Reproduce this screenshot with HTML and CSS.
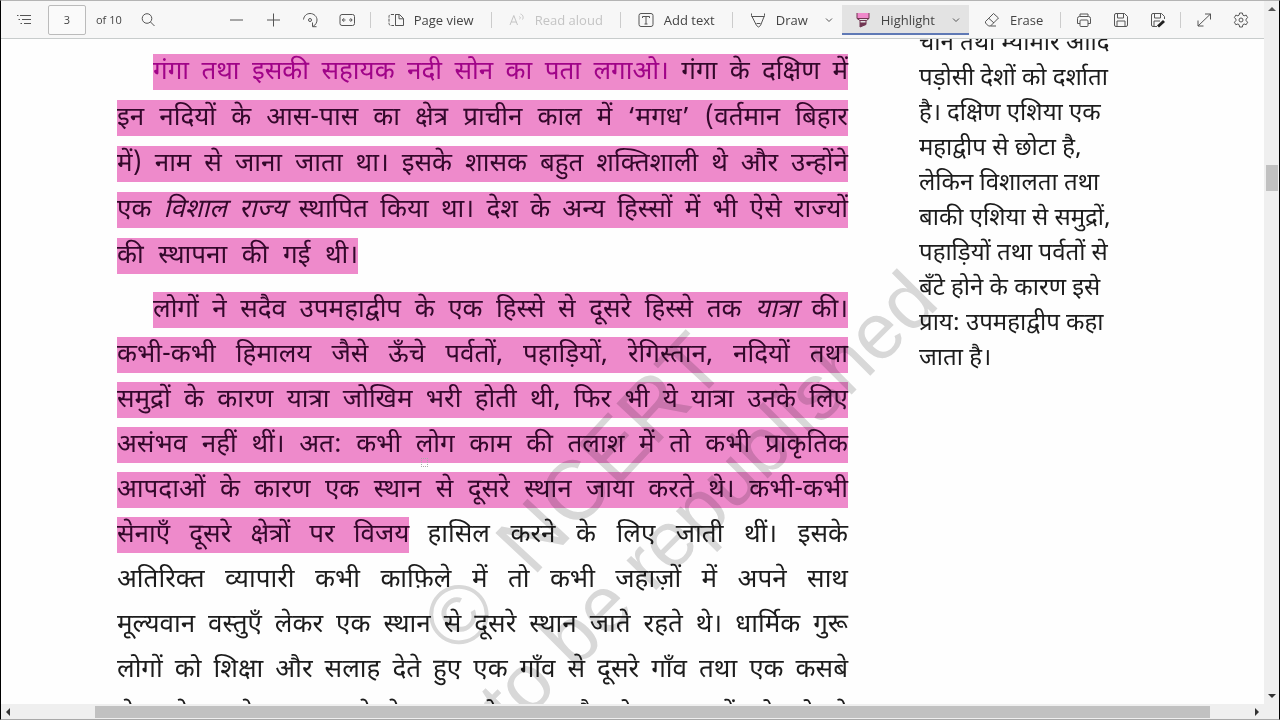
FILE: index.html
```html
<!DOCTYPE html>
<html lang="hi">
<head>
<meta charset="utf-8">
<title>PDF</title>
<link rel="stylesheet" href="styles.css">
</head>
<body>
<div class="viewer">
  <div class="main">
    <header class="toolbar" lang="en">
      <button class="icon-btn" aria-label="Contents"><svg viewBox="0 0 16 16"><path d="M4 3.500h11M6 7.500h9M8 11.500h7M1 3.500h1.500M2.500 7.500h1.500M4.500 11.500h1.500"/></svg></button>
      <input class="page-no" aria-label="Page number" value="3">
      <span class="count">of 10</span>
      <button class="icon-btn" aria-label="Search"><svg viewBox="0 0 16 16"><circle cx="7" cy="6.500" r="4.800"/><path d="M10.500 10l4 4"/></svg></button>
      <div class="zoom-group">
        <button class="icon-btn" aria-label="Zoom out"><svg viewBox="0 0 16 16"><path d="M2 8h13"/></svg></button>
        <button class="icon-btn" aria-label="Zoom in"><svg viewBox="0 0 16 16"><path d="M2 8h13M8.500 1.500v13"/></svg></button>
        <button class="icon-btn" aria-label="Rotate"><svg viewBox="0 0 16 16"><path d="M1.500 7.500C2 3.500 5 1.500 8 1.500c4 0 7 3 7 6.500 0 2.500-1.500 5-4 6.500M10.500 10.500v4.200h4"/><circle cx="8" cy="8" r="1.500"/></svg></button>
        <button class="icon-btn" aria-label="Fit to width"><svg viewBox="0 0 16 16"><rect x="1" y="2.500" width="14.500" height="11" rx="2"/><path d="M6.500 8h-3M5 6.200L3.300 8 5 9.800M10 8h3M11.500 6.200L13.200 8l-1.700 1.800"/></svg></button>
      </div>
      <span class="sep"></span>
      <button class="tool"><svg viewBox="0 0 16 16"><path d="M7.500 2.500v11M6 2.500H3a2 2 0 0 0-2 2v7a2 2 0 0 0 2 2h3" stroke-dasharray="3 1"/><path d="M7.500 2.500h4l4 4v7h-8zM11 2.500v4.300h4.500"/></svg>Page view</button>
      <span class="sep"></span>
      <button class="tool" disabled><svg viewBox="0 0 16 16"><path d="M1 13L4.800 3.500 8.500 13M2.300 10h5M10.500 4.500c1 .5 1 2 0 2.500M11.500 2c3 1 3 4 2 5.500"/></svg>Read aloud</button>
      <span class="sep"></span>
      <button class="tool"><svg viewBox="0 0 16 16"><rect x="1" y="1.500" width="14" height="13" rx="2"/><path d="M4.500 6V4.500h7V6M8 4.500v7.500M6.500 12h3"/></svg>Add text</button>
      <span class="sep"></span>
      <button class="tool paired"><svg viewBox="0 0 16 16"><path d="M1.500 1.500v2L6.500 13.500l2 1.500 2-1.500 4-10v-2M1.500 4.500h13M6.500 11.500h4"/></svg>Draw</button>
      <button class="chevron" aria-label="Draw options"><svg viewBox="0 0 8 8"><path d="M1 2.500l3 3 3-3"/></svg></button>
      <div class="active">
        <button class="tool paired"><svg viewBox="0 0 16 16"><path d="M2 1h12v6H2z" fill="#ef88ca" stroke="none"/><path d="M2 1v5.500l3 2h6.500l2.500-2V1M2 6.500h12M5 8.500v6.500l6-2.500v-4" stroke="#713551"/><path d="M5 10.500h6v2L5 15z" fill="#713551" stroke="none"/></svg>Highlight</button>
        <button class="chevron" aria-label="Highlight options"><svg viewBox="0 0 8 8"><path d="M1 2.500l3 3 3-3"/></svg></button>
      </div>
      <button class="tool"><svg viewBox="0 0 16 16"><path d="M1.500 9.500l8-8 5 4.500-8 8H4.500l-3-3zM5 6.500l5 4.500M6.500 14H12"/></svg>Erase</button>
      <span class="sep"></span>
      <button class="icon-btn" aria-label="Print"><svg viewBox="0 0 16 16"><path d="M4 4.500V2h8v2.500M4 11.500H1.500V6.500a2 2 0 0 1 2-2h9a2 2 0 0 1 2 2v5H12"/><rect x="4" y="8" width="8" height="6.500" rx="1"/></svg></button>
      <button class="icon-btn" aria-label="Save"><svg viewBox="0 0 16 16"><path d="M3 1.500h8.500l3 3V13a1.500 1.500 0 0 1-1.500 1.500H3A1.500 1.500 0 0 1 1.500 13V3A1.500 1.500 0 0 1 3 1.500zM4.500 1.500V6h6V1.500M4 14.500V9h8v5.500"/></svg></button>
      <button class="icon-btn" aria-label="Save as"><svg viewBox="0 0 16 16"><path d="M7 14.500H3A1.500 1.500 0 0 1 1.500 13V3A1.500 1.500 0 0 1 3 1.500h8.500l3 3V7M4.500 1.500V6h6V1.500M4 14.500V9h6"/><path d="M8 14.500l6-5.500" stroke="#222" stroke-width="3"/></svg></button>
      <span class="sep"></span>
      <button class="icon-btn" aria-label="Full screen"><svg viewBox="0 0 16 16"><path d="M2 14L14.500 2M9 2h5.500v5.500M2 8.500V14h5.500"/></svg></button>
      <button class="icon-btn" aria-label="Settings"><svg viewBox="0 0 16 16"><path d="M6.600 1h2.800l.5 2.100 1.200.7 2.100-.7 1.400 2.500-1.500 1.500v1.600l1.500 1.500-1.400 2.500-2.100-.7-1.200.7-.5 2.300H6.600l-.5-2.300-1.200-.7-2.100.7-1.400-2.500 1.500-1.500V7.100L1.400 5.600l1.400-2.500 2.100.7 1.200-.7z"/><circle cx="8" cy="8" r="2"/></svg></button>
    </header>
    <main class="page">
      <article class="body">
        <p class="first">
          <span class="line hl indent"><span class="answer">गंगा तथा इसकी सहायक नदी सोन का पता लगाओ।</span> गंगा के दक्षिण में</span>
          <span class="line hl">इन नदियों के आस-पास का क्षेत्र प्राचीन काल में ‘मगध’ (वर्तमान बिहार</span>
          <span class="line hl">में) नाम से जाना जाता था। इसके शासक बहुत शक्तिशाली थे और उन्होंने</span>
          <span class="line hl">एक <i>विशाल राज्य</i> स्थापित किया था। देश के अन्य हिस्सों में भी ऐसे राज्यों</span>
          <span class="line hl short">की स्थापना की गई थी।</span>
        </p>
        <p class="second">
          <span class="line hl indent">लोगों ने सदैव उपमहाद्वीप के एक हिस्से से दूसरे हिस्से तक <i>यात्रा</i> की।</span>
          <span class="line hl">कभी-कभी हिमालय जैसे ऊँचे पर्वतों, पहाड़ियों, रेगिस्तान, नदियों तथा</span>
          <span class="line hl">समुद्रों के कारण यात्रा जोखिम भरी होती थी, फिर भी ये यात्रा उनके लिए</span>
          <span class="line hl">असंभव नहीं थीं। अत: कभी लोग काम की तलाश में तो कभी प्राकृतिक</span>
          <span class="line hl">आपदाओं के कारण एक स्थान से दूसरे स्थान जाया करते थे। कभी-कभी</span>
          <span class="split"><span class="line hl part">सेनाएँ दूसरे क्षेत्रों पर विजय</span><span class="line rest">हासिल करने के लिए जाती थीं। इसके</span></span>
          <span class="line">अतिरिक्त व्यापारी कभी काफ़िले में तो कभी जहाज़ों में अपने साथ</span>
          <span class="line">मूल्यवान वस्तुएँ लेकर एक स्थान से दूसरे स्थान जाते रहते थे। धार्मिक गुरू</span>
          <span class="line">लोगों को शिक्षा और सलाह देते हुए एक गाँव से दूसरे गाँव तथा एक कसबे</span>
          <span class="line">से दूसरे कसबे जाया करते थे। कुछ लोग नए और रोचक स्थानों को खोजने</span>
        </p>
      </article>
      <aside class="note">
        <span>चीन तथा म्यामार आदि</span>
        <span>पड़ोसी देशों को दर्शाता</span>
        <span>है। दक्षिण एशिया एक</span>
        <span>महाद्वीप से छोटा है,</span>
        <span>लेकिन विशालता तथा</span>
        <span>बाकी एशिया से समुद्रों,</span>
        <span>पहाड़ियों तथा पर्वतों से</span>
        <span>बँटे होने के कारण इसे</span>
        <span>प्राय: उपमहाद्वीप कहा</span>
        <span>जाता है।</span>
      </aside>
      <svg class="watermark" viewBox="0 0 1263 665">
        <text transform="translate(458 618) rotate(-47)">©&#160;&#160;NCERT</text>
        <text class="second-line" transform="translate(940 266) rotate(-45)" text-anchor="end">to be republished</text>
      </svg>
      <span class="cursor"></span>
    </main>
    <div class="hbar"><span class="arrow left"></span><span class="hthumb"></span><span class="arrow right"></span></div>
  </div>
  <div class="vbar"><span class="arrow up"></span><span class="vthumb"></span><span class="arrow down"></span></div>
</div>
</body>
</html>
```

FILE: styles.css
```css
* { box-sizing: border-box; }
body { margin: 0; background: #fff; }
.viewer {
  display: flex;
  height: 100vh;
  overflow: hidden;
  border: 1px solid #000;
  border-top-color: #b4b4b4;
  border-bottom-color: #a8a8a8;
}
.main { flex: 1; min-width: 0; display: flex; flex-direction: column; }

.toolbar {
  flex: none;
  display: flex;
  align-items: center;
  height: 38px;
  padding-left: 4px;
  background: #f7f7f7;
  border-bottom: 1px solid #c8cccc;
  font: 13px/16px "Open Sans", "Noto Sans", sans-serif;
  color: #444;
  white-space: nowrap;
}
.toolbar svg { flex: none; width: 16px; height: 16px; fill: none; stroke: #555; stroke-width: 1; }
button { border: 0; padding: 0; background: none; font: inherit; color: inherit; }
.icon-btn { flex: none; width: 37px; height: 32px; display: flex; align-items: center; justify-content: center; }
.page-no {
  width: 38px;
  height: 30px;
  margin-left: 6px;
  padding: 0;
  border: 1px solid #bbb;
  border-radius: 2px;
  background: #fafafa;
  font: inherit;
  font-size: 11px;
  color: #444;
  text-align: center;
}
.count { margin: 0 8px 0 10px; font-size: 11px; }
.zoom-group { display: flex; margin-left: 51px; }
.sep { flex: none; width: 1px; height: 16px; margin: 0 4px; background: #ccc; }
.tool { flex: none; display: flex; align-items: center; gap: 10px; height: 30px; padding: 0 13px; }
.tool:disabled { color: #c4c4c4; }
.tool:disabled svg { stroke: #c4c4c4; }
.paired { padding-right: 8px; }
.chevron { flex: none; width: 26px; height: 30px; display: flex; align-items: center; justify-content: center; }
.toolbar .chevron svg { width: 8px; height: 8px; }
.active { flex: none; display: flex; height: 30px; margin-right: 2px; background: #e3e3e3; box-shadow: inset 0 -2px #5f79b5; }

.page {
  position: relative;
  flex: 1;
  min-height: 0;
  overflow: hidden;
  display: flex;
  padding-left: 116px;
  background: #fefefe;
  color: #1c1c1c;
  font: 26px/38px "Noto Sans Devanagari", "Noto Sans", sans-serif;
}
.body { flex: none; width: 731px; padding-top: 15px; }
.body p { display: flex; flex-direction: column; margin: 0 0 18px; }
.first { gap: 10px; }
.second { gap: 9px; }
.line {
  display: block;
  height: 36px;
  white-space: nowrap;
  text-align: justify;
  text-align-last: justify;
}
.hl { background: #ee8acb; color: #33082b; }
.indent { margin-left: 36px; }
.answer { color: #a00488; }
.short { width: 33%; }
.split { display: flex; gap: 18px; }
.part { width: 40%; }
.rest { flex: 1; }

.note {
  display: flex;
  flex-direction: column;
  margin: -12px 0 0 71px;
  font-size: 24px;
  line-height: 35px;
  white-space: nowrap;
}
.watermark {
  position: absolute;
  left: 0;
  top: 0;
  width: 1263px;
  height: 665px;
  mix-blend-mode: multiply;
  fill: #d9d9d9;
  font: 84px "Liberation Sans", Arial, sans-serif;
}
.second-line { font-size: 79px; }
.cursor {
  position: absolute;
  left: 420px;
  top: 419px;
  width: 7px;
  height: 9px;
  border: 1px dotted #aaa;
}

.hbar { flex: none; display: flex; align-items: center; height: 15px; padding: 0 5px; background: #efefef; }
.hthumb { width: 89%; height: 12px; margin-left: 85px; margin-right: auto; background: #c1c1c1; }
.vbar { flex: none; width: 15px; display: flex; flex-direction: column; align-items: center; padding: 6px 0 21px; background: #efefef; }
.vthumb { width: 12px; height: 26px; margin-top: 154px; margin-bottom: auto; background: #c1c1c1; }
.arrow { border: 4px solid transparent; }
.up { border-top: 0; border-bottom-color: #555; }
.down { border-bottom: 0; border-top-color: #333; }
.left { border-left: 0; border-right-color: #333; }
.right { border-right: 0; border-left-color: #333; }
```
